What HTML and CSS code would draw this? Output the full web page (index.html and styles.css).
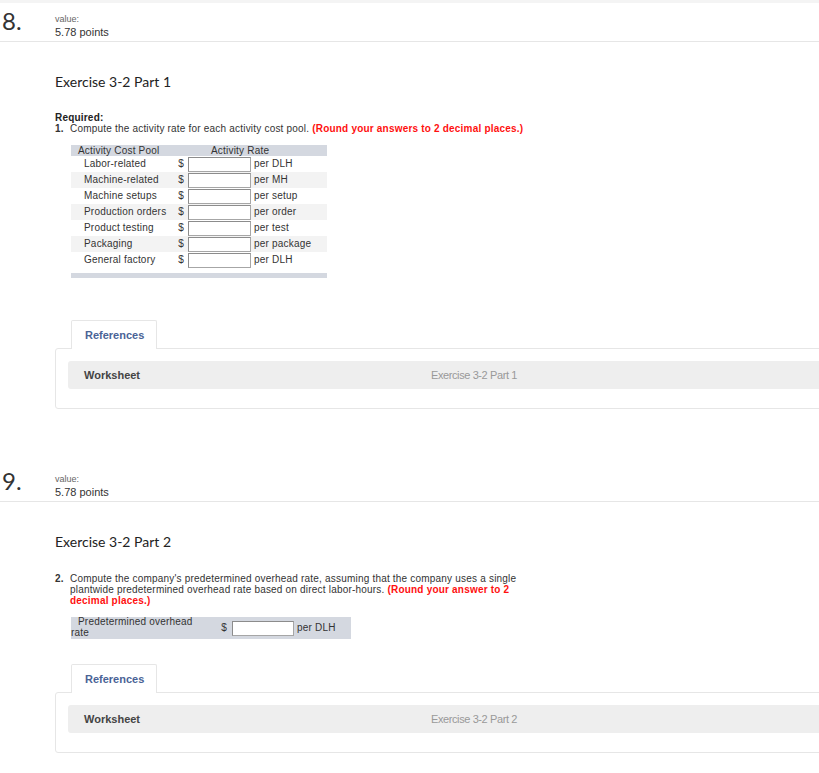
FILE: index.html
```html
<!DOCTYPE html>
<html lang="en">
<head>
<meta charset="utf-8">
<title>Exercise 3-2</title>
<link rel="stylesheet" href="styles.css">
</head>
<body>
<div class="page">
  <div class="topstrip"></div>

  <section class="question q1">
    <header class="q-head">
      <div class="q-num">8.</div>
      <div class="q-meta">
        <div class="q-value">value:</div>
        <div class="q-points">5.78 points</div>
      </div>
    </header>
    <div class="q-body">
      <h2 class="q-title">Exercise 3-2 Part 1</h2>
      <div class="prompt">
        <div class="req">Required:</div>
        <div class="item">
          <span class="item-num">1.</span>
          <span class="item-text">Compute the activity rate for each activity cost pool. <strong class="hint">(Round your answers to 2 decimal places.)</strong></span>
        </div>
      </div>

      <div class="rate-table">
        <div class="rt-head">
          <div class="rt-h1">Activity Cost Pool</div>
          <div class="rt-h2">Activity Rate</div>
        </div>
        <div class="rt-row"><div class="rt-label">Labor-related</div><div class="rt-cur">$</div><input class="rt-input" type="text"><div class="rt-unit">per DLH</div></div>
        <div class="rt-row alt"><div class="rt-label">Machine-related</div><div class="rt-cur">$</div><input class="rt-input" type="text"><div class="rt-unit">per MH</div></div>
        <div class="rt-row"><div class="rt-label">Machine setups</div><div class="rt-cur">$</div><input class="rt-input" type="text"><div class="rt-unit">per setup</div></div>
        <div class="rt-row alt"><div class="rt-label">Production orders</div><div class="rt-cur">$</div><input class="rt-input" type="text"><div class="rt-unit">per order</div></div>
        <div class="rt-row"><div class="rt-label">Product testing</div><div class="rt-cur">$</div><input class="rt-input" type="text"><div class="rt-unit">per test</div></div>
        <div class="rt-row alt"><div class="rt-label">Packaging</div><div class="rt-cur">$</div><input class="rt-input" type="text"><div class="rt-unit">per package</div></div>
        <div class="rt-row"><div class="rt-label">General factory</div><div class="rt-cur">$</div><input class="rt-input" type="text"><div class="rt-unit">per DLH</div></div>
        <div class="rt-foot"></div>
      </div>

      <div class="refs">
        <div class="refs-tab">References</div>
        <div class="refs-panel">
          <div class="refs-row">
            <div class="refs-name">Worksheet</div>
            <div class="refs-link">Exercise 3-2 Part 1</div>
          </div>
        </div>
      </div>
    </div>
  </section>

  <section class="question q2">
    <header class="q-head">
      <div class="q-num">9.</div>
      <div class="q-meta">
        <div class="q-value">value:</div>
        <div class="q-points">5.78 points</div>
      </div>
    </header>
    <div class="q-body">
      <h2 class="q-title">Exercise 3-2 Part 2</h2>
      <div class="prompt">
        <div class="item">
          <span class="item-num">2.</span>
          <span class="item-text">Compute the company's predetermined overhead rate, assuming that the company uses a single<br>plantwide predetermined overhead rate based on direct labor-hours. <strong class="hint">(Round your answer to 2<br>decimal places.)</strong></span>
        </div>
      </div>

      <div class="oh-table">
        <div class="oh-label">Predetermined overhead rate</div>
        <div class="oh-cur">$</div>
        <input class="oh-input" type="text">
        <div class="oh-unit">per DLH</div>
      </div>

      <div class="refs">
        <div class="refs-tab">References</div>
        <div class="refs-panel">
          <div class="refs-row">
            <div class="refs-name">Worksheet</div>
            <div class="refs-link">Exercise 3-2 Part 2</div>
          </div>
        </div>
      </div>
    </div>
  </section>
</div>
</body>
</html>
```

FILE: styles.css
```css
html, body {
  margin: 0;
  padding: 0;
  background: #ffffff;
  overflow: hidden;
}

body {
  font-family: "Liberation Sans", Arial, sans-serif;
  color: #333333;
}

.page {
  width: 819px;
  overflow: hidden;
}

.topstrip {
  height: 3px;
  background: #f4f4f4;
}

/* ---------- question header ---------- */
.question {
  margin-bottom: 54px;
}

.q-head {
  display: flex;
  height: 39px;
  box-sizing: border-box;
  border-bottom: 1px solid #e6e6e6;
}

.q-num {
  width: 53px;
  padding-left: 2px;
  padding-top: 6px;
  font-family: "Lato", "Open Sans", sans-serif;
  font-weight: 400;
  font-size: 24px;
  line-height: 24px;
  color: #333333;
}

.q-meta {
  padding-top: 11px;
}

.q-value {
  font-size: 9px;
  line-height: 11px;
  color: #666666;
  margin-bottom: 1px;
}

.q-points {
  font-size: 11px;
  line-height: 13px;
  color: #333333;
}

/* ---------- question body ---------- */
.q-body {
  padding-left: 55px;
}

.q-title {
  margin: 31px 0 0;
  font-family: "Lato", "Open Sans", sans-serif;
  font-weight: 400;
  font-size: 14px;
  line-height: 17px;
  color: #222222;
}

.prompt {
  margin-top: 22px;
  font-size: 10px;
  line-height: 11px;
  letter-spacing: 0.2px;
  color: #333333;
}

.q2 .prompt {
  margin-top: 23px;
}

.req {
  font-weight: bold;
  color: #222222;
}

.item {
  display: flex;
}

.item-num {
  width: 15px;
  flex: none;
  font-weight: bold;
}

.hint {
  color: #ff1010;
  font-weight: bold;
}

/* ---------- activity rate table ---------- */
.rate-table {
  margin: 11px 0 0 16px;
  width: 256px;
  font-size: 10px;
  letter-spacing: 0.2px;
  color: #333333;
}

.rt-head {
  display: flex;
  height: 11px;
  line-height: 11px;
  background: #d4d8e0;
}

.rt-h1 {
  width: 104px;
  padding-left: 7px;
  box-sizing: border-box;
}

.rt-h2 {
  padding-left: 36px;
}

.rt-row {
  display: flex;
  align-items: center;
  height: 16px;
  line-height: 16px;
}

.rt-row.alt {
  background: #f3f3f3;
}

.rt-label {
  width: 104px;
  padding-left: 13px;
  box-sizing: border-box;
  white-space: nowrap;
}

.rt-cur,
.oh-cur {
  text-align: right;
  box-sizing: border-box;
}

.rt-cur {
  width: 13px;
  padding-right: 4px;
}

.rt-input,
.oh-input {
  box-sizing: border-box;
  margin: 0;
  padding: 0;
  height: 15px;
  border: 1px solid #a6a6a6;
  border-top-color: #8c8c8c;
  border-left-color: #8c8c8c;
  background: #ffffff;
  flex: none;
}

.rt-input {
  width: 63px;
}

.rt-unit,
.oh-unit {
  padding-left: 3px;
  white-space: nowrap;
}

.rt-foot {
  margin-top: 5px;
  height: 5px;
  background: #d4d8e0;
}

/* ---------- overhead table ---------- */
.oh-table {
  display: flex;
  align-items: center;
  margin: 11px 0 0 16px;
  width: 280px;
  min-height: 22px;
  background: #d4d8e0;
  font-size: 10px;
  line-height: 10.7px;
  letter-spacing: 0.2px;
  color: #333333;
}

.oh-label {
  align-self: flex-start;
  width: 128px;
  text-indent: 7px;
}

.oh-cur {
  width: 33px;
  padding-right: 5px;
}

.oh-input {
  width: 62px;
}

/* ---------- references ---------- */
.refs {
  display: flex;
  flex-direction: column;
  align-items: flex-start;
}

.q1 .refs {
  margin-top: 42px;
}

.q2 .refs {
  margin-top: 25px;
}

.refs-tab {
  position: relative;
  z-index: 1;
  margin-left: 16px;
  margin-bottom: -1px;
  height: 28px;
  padding: 0 12px 0 13px;
  border: 1px solid #e6e6e6;
  border-bottom: none;
  border-radius: 2px 2px 0 0;
  background: #ffffff;
  font-size: 11px;
  font-weight: bold;
  line-height: 28px;
  color: #4a6396;
}

.refs-panel {
  width: 820px;
  padding: 12px 0 19px 12px;
  border: 1px solid #e6e6e6;
  border-radius: 3px;
}

.refs-row {
  display: flex;
  align-items: center;
  height: 28px;
  padding-left: 16px;
  background: #eeeeee;
  border-radius: 3px;
  font-size: 11px;
}

.refs-name {
  width: 347px;
  font-weight: bold;
  color: #444444;
}

.refs-link {
  color: #999999;
  letter-spacing: -0.4px;
}
```
